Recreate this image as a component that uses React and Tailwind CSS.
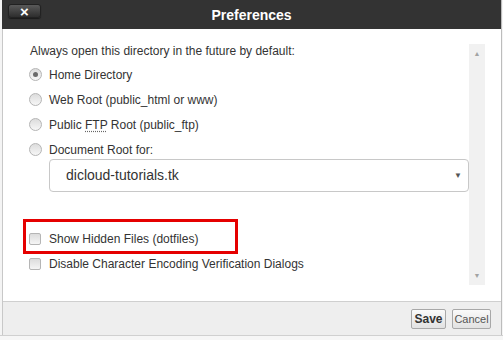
import React from "react";

function Radio({ checked }) {
  return (
    <span className="relative flex h-[13px] w-[13px] shrink-0 items-center justify-center rounded-full border border-[#b5b5b5] bg-gradient-to-b from-[#dcdcdc] to-[#f7f7f7]">
      {checked && <span className="h-[5px] w-[5px] rounded-full bg-[#6a6a6a]" />}
    </span>
  );
}

function Check() {
  return (
    <span className="block h-[12px] w-[12px] shrink-0 rounded-[2px] border border-[#b5b5b5] bg-gradient-to-b from-[#dcdcdc] to-[#f5f5f5]" />
  );
}

export default function App() {
  const font = { fontFamily: '"Liberation Sans", Arial, sans-serif' };
  return (
    <div className="flex h-[340px] w-[503px] flex-col overflow-hidden bg-[#f7f7f7]" style={font}>
      <div className="flex h-[335px]">
        <div className="w-[2px] shrink-0 bg-[#f4f4f4]" />
        <div className="flex w-[499px] shrink-0 flex-col border-l border-[#c8c8c8] bg-white">
          {/* header */}
          <div className="grid h-[29px] shrink-0 grid-cols-[1fr_auto_1fr] bg-[#333333] -ml-px">
            <div className="pl-[6px] pt-[4px]">
              <div className="flex h-[14px] w-[33px] items-center justify-center rounded-[3px] border border-[#222] bg-gradient-to-b from-[#5a5a5a] to-[#2e2e2e] shadow-[0_1px_1px_rgba(0,0,0,0.5)]">
                <span className="text-[15px] font-bold leading-none text-white">×</span>
              </div>
            </div>
            <div className="flex items-center pt-[1px] text-[14px] font-bold text-white">Preferences</div>
            <div />
          </div>
          {/* body */}
          <div className="flex min-h-0 flex-1">
            <div className="relative flex flex-1 flex-col pl-[27px] pt-[14px] text-[12px] text-[#333]">
              <div className="h-[16px] leading-[16px]">Always open this directory in the future by default:</div>
              <div className="mt-[3px] flex h-[25px] items-center gap-[7px] -ml-px">
                <Radio checked />
                <span>Home Directory</span>
              </div>
              <div className="flex h-[25px] items-center gap-[7px] -ml-px">
                <Radio />
                <span>Web Root (public_html or www)</span>
              </div>
              <div className="flex h-[25px] items-center gap-[7px] -ml-px">
                <Radio />
                <span>
                  Public <span className="underline decoration-dotted decoration-[#666] underline-offset-2">FTP</span> Root (public_ftp)
                </span>
              </div>
              <div className="flex h-[25px] items-center gap-[7px] -ml-px">
                <Radio />
                <span>Document Root for:</span>
              </div>
              <div className="-mt-[3px] ml-[19px] flex h-[33px] items-center justify-between rounded-[4px] border border-[#c8c8c8] pl-[16px] pr-[6px] text-[14px] text-[#333]">
                <span>dicloud-tutorials.tk</span>
                <span className="text-[8px] text-[#555]">▼</span>
              </div>
              <div className="relative mt-[34px] flex h-[25px] items-center gap-[7px] -ml-px">
                <Check />
                <span className="ml-px">Show Hidden Files (dotfiles)</span>
                <div className="pointer-events-none absolute left-[-6px] top-[-7px] h-[35px] w-[215px] border-[3px] border-[#e50000]" />
              </div>
              <div className="flex h-[25px] items-center gap-[7px] -ml-px">
                <Check />
                <span className="ml-px">Disable Character Encoding Verification Dialogs</span>
              </div>
            </div>
            <div className="mb-[16px] mr-[16px] mt-[15px] flex w-[16px] shrink-0 flex-col items-center justify-between bg-[#f1f1f1] py-[6px] text-[7px] leading-none text-[#a3a3a3]">
              <span>▲</span>
              <span>▼</span>
            </div>
          </div>
          {/* footer */}
          <div className="flex h-[34px] shrink-0 items-start justify-end gap-[6px] border-t border-[#cfcfcf] bg-[#eeeeee] pr-[10px] pt-[7px]">
            <button className="h-[20px] w-[35px] rounded-[2px] border border-[#a8a8a8] bg-gradient-to-b from-[#fafafa] to-[#e2e2e2] text-[12px] font-bold text-[#333]">
              Save
            </button>
            <button className="h-[20px] w-[39px] rounded-[2px] border border-[#a8a8a8] bg-gradient-to-b from-[#fafafa] to-[#e2e2e2] text-[11px] text-[#555]">
              Cancel
            </button>
          </div>
        </div>
        <div className="flex-1 border-l border-[#bcbcbc] bg-[#f4f4f4]" />
      </div>
      <div className="flex-1 border-t border-[#d0d0d0] bg-[#f6f6f6]" />
    </div>
  );
}
